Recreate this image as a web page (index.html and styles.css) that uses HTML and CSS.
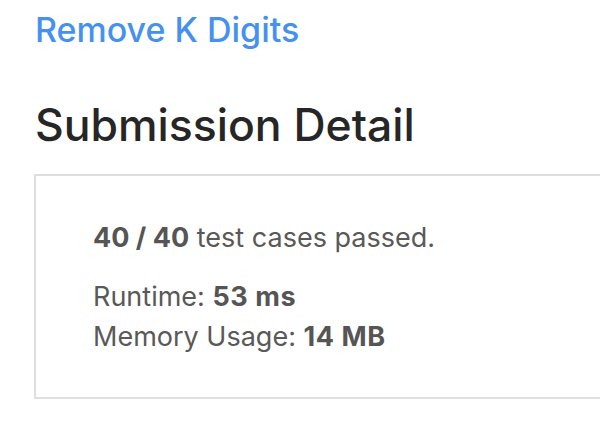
FILE: index.html
```html
<!DOCTYPE html>
<html>
<head>
<meta charset="utf-8">
<link rel="stylesheet" href="styles.css">
</head>
<body>
<div class="page">
  <a class="problem-link" href="#">Remove K Digits</a>
  <h1 class="page-title">Submission Detail</h1>
  <div class="detail-box">
    <div class="result-line"><strong>40 / 40</strong> test cases passed.</div>
    <div class="stats">
      <div class="stat-line">Runtime: <strong>53 ms</strong></div>
      <div class="stat-line">Memory Usage: <strong>14 MB</strong></div>
    </div>
  </div>
</div>
</body>
</html>
```
FILE: styles.css
```css
html, body {
  margin: 0;
  padding: 0;
  background: #ffffff;
  overflow: hidden;
}
body {
  font-family: "Inter", "Liberation Sans", sans-serif;
}
.page {
  padding: 10px 0 0 35px;
}
.problem-link {
  display: block;
  color: #4691ef;
  text-decoration: none;
  font-size: 34px;
  line-height: 40px;
  font-weight: 500;
}
.page-title {
  margin: 50px 0 0 0;
  font-size: 44.5px;
  line-height: 50px;
  font-weight: 500;
  color: #262626;
}
.detail-box {
  margin: 24px 0 0 -1px;
  width: 700px;
  height: 225px;
  border: 2px solid #dedede;
  padding: 42px 0 0 57px;
  box-sizing: border-box;
  color: #595959;
  font-size: 27px;
}
.detail-box strong {
  font-weight: 700;
  color: #555555;
}
.stat-line strong {
  letter-spacing: 0.6px;
}
.result-line {
  line-height: 40px;
}
.stats {
  margin-top: 19px;
}
.stat-line {
  line-height: 40px;
}
```
